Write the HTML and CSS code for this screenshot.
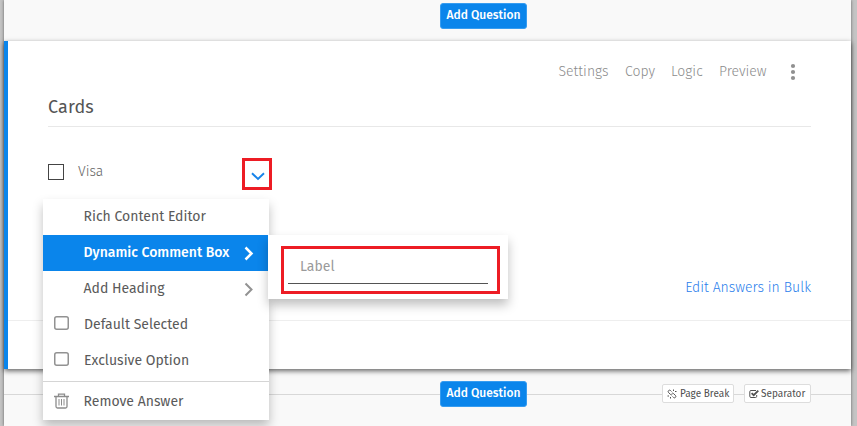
FILE: index.html
```html
<!DOCTYPE html>
<html lang="en">
<head>
<meta charset="utf-8">
<title>Survey editor</title>
<link rel="stylesheet" href="styles.css">
</head>
<body>
<main class="page">
  <div class="add-row add-row--top"><button class="add-btn"><span>Add Question</span></button></div>
  <section class="card">
    <nav class="actions">
      <a class="settings">Settings</a><a class="copy">Copy</a><a class="logic">Logic</a><a class="preview">Preview</a>
      <svg class="dots" width="6" height="18" viewBox="0 0 6 18"><circle cx="3" cy="3" r="2.1"/><circle cx="3" cy="9" r="2.1"/><circle cx="3" cy="15" r="2.1"/></svg>
    </nav>
    <h1 class="title"><span>Cards</span></h1>
    <div class="answer">
      <span class="box"></span>
      <span class="answer-text">Visa</span>
      <span class="toggle"><svg width="14" height="9" viewBox="0 0 14 9"><path d="M1 1.2 7 7 13 1.2"/></svg></span>
      <div class="menu">
        <div class="item"><span>Rich Content Editor</span></div>
        <div class="item item--active"><span>Dynamic Comment Box</span>
          <svg class="arrow" width="10" height="15" viewBox="0 0 10 15"><path d="M1.5 1.5 7.5 7.5 1.5 13.5"/></svg>
          <div class="submenu"><div class="field-frame"><div class="field"><span>Label</span></div></div></div>
        </div>
        <div class="item"><span>Add Heading</span>
          <svg class="arrow" width="10" height="15" viewBox="0 0 10 15"><path d="M1.5 1.5 7.5 7.5 1.5 13.5"/></svg>
        </div>
        <div class="item"><svg class="check" width="15" height="14" viewBox="0 0 15 14"><rect x=".75" y=".75" width="13.5" height="12.5" rx="2"/></svg><span>Default Selected</span></div>
        <div class="item"><svg class="check" width="15" height="14" viewBox="0 0 15 14"><rect x=".75" y=".75" width="13.5" height="12.5" rx="2"/></svg><span>Exclusive Option</span></div>
        <div class="item item--remove">
          <svg class="trash" width="15" height="16" viewBox="0 0 15 16"><path d="M0 3.5H15M4.5 3.5V1.2H10.5V3.5M2 3.5V13.5Q2 15 3.5 15H11.5Q13 15 13 13.5V3.5"/><path class="thin" d="M5 6V12.5M7.5 6V12.5M10 6V12.5"/></svg>
          <span>Remove Answer</span>
        </div>
      </div>
    </div>
    <div class="bulk"><a>Edit Answers in Bulk</a></div>
    <div class="card-foot"></div>
  </section>
  <div class="add-row add-row--bottom">
    <i class="rule"></i>
    <button class="add-btn"><span>Add Question</span></button>
    <i class="rule rule--mid"></i>
    <button class="mini mini--break"><svg width="10" height="10" viewBox="0 0 10 10"><path d="M4.5 2.5 3.5 1.5Q2.5.7 1.6 1.6T1.5 3.5L3.6 5.5Q4.5 6.2 5.2 5.6M5.6 7.5 6.6 8.5Q7.5 9.3 8.4 8.4T8.5 6.5L6.4 4.5Q5.5 3.8 4.8 4.4M6.5.5V2M8 2.5H9.5M.5 7H2M3.5 8V9.5"/></svg><span>Page Break</span></button>
    <i class="rule rule--gap"></i>
    <button class="mini mini--sep"><svg width="10" height="10" viewBox="0 0 10 10"><path d="M7 1.5H2Q.8 1.5.8 2.7V7.3Q.8 8.5 2 8.5H6.5Q7.7 8.5 7.7 7.3V6"/><path class="tick" d="M2.6 4.2 4.7 6.2 9.3 1.7"/></svg><span>Separator</span></button>
    <i class="rule rule--end"></i>
  </div>
</main>
</body>
</html>
```

FILE: styles.css
```css
* { box-sizing: border-box; }
body { margin: 0; width: 857px; height: 426px; overflow: hidden; background: #c4c4c4; font-family: "Fira Sans", "Noto Sans", sans-serif; color: #5a5a5a; }
span, a { white-space: nowrap; }
svg { display: block; flex: none; fill: none; stroke: currentColor; }
button { font: inherit; }
.page { width: 847px; height: 426px; margin-left: 4px; background: #f9f9f9; box-shadow: 0 0 3px rgba(0,0,0,.5); }
.add-row { display: flex; align-items: flex-start; }
.add-row--top { height: 41px; padding: 3px 0 0 436px; }
.add-btn { width: 87px; height: 26px; flex: none; padding: 0; border: 1px solid #369cf0; border-radius: 3px; background: #0a85eb; color: #fff; font-size: 12px; font-weight: 500; line-height: 23px; display: flex; justify-content: center; }
.card { position: relative; height: 328px; border-left: 4px solid #0a85eb; background: #fff; box-shadow: 0 2px 5px rgba(0,0,0,.6); display: flex; flex-direction: column; }
.actions { height: 60px; flex: none; padding: 21px 55px 0 550.5px; display: flex; font-size: 14px; font-weight: 300; line-height: 20px; color: #8c8c8c; }
.settings { width: 66.5px; } .copy { width: 46px; } .logic { width: 48px; } .preview { width: 71px; }
.actions a { flex: none; }
.dots { fill: #909090; stroke: none; margin-top: 1px; }
.title { flex: none; margin: -6px 40px 0; height: 32px; border-bottom: 1px solid #e8e8e8; font-size: 18px; font-weight: 400; line-height: 24px; color: #545454; letter-spacing: .1px; }
.answer { position: relative; flex: none; margin: 31px 40px 0; height: 32px; display: flex; }
.box { width: 16px; height: 16px; margin: 6px 14px 0 0; border: 1px solid #444; }
.answer-text { width: 164px; font-size: 14px; font-weight: 300; line-height: 28px; color: #666; }
.toggle { width: 30px; height: 32px; border: 3px solid #ed1c24; padding: 11px 0 0 6px; color: #1683ea; }
.toggle svg { stroke-width: 1.9; }
.menu { position: absolute; left: -5px; top: 41px; width: 226px; height: 221px; background: #fff; box-shadow: 0 6px 10px rgba(0,0,0,.25); z-index: 2; font-size: 14px; line-height: 36px; }
.item { position: relative; height: 36px; padding-left: 40.5px; display: flex; }
.item--active { background: #0a85eb; color: #fff; font-weight: 500; }
.arrow { position: absolute; left: 201px; top: 11px; stroke: #929292; stroke-width: 2; }
.item--active .arrow { stroke: #fff; stroke-width: 2.5; }
.check { margin: 9px 15px 0 -29.5px; stroke: #929292; stroke-width: 1.5; }
.item--remove { height: 40px; margin-top: 2px; border-top: 1px solid #d5d5d5; line-height: 40px; }
.trash { margin: 11px 15px 0 -30px; stroke: #8c8c8c; stroke-width: 1.3; }
.trash .thin { stroke-width: 1; }
.submenu { position: absolute; left: 225px; top: 0; width: 240px; height: 64px; padding: 11px 8px 5px 13px; background: #fff; box-shadow: 0 6px 10px rgba(0,0,0,.25); color: #9a9a9a; font-weight: 400; }
.field-frame { height: 48px; border: 3px solid #ed1c24; padding: 0 9px 0 4px; }
.field { height: 35px; padding-left: 12px; border-bottom: 1px solid #545454; }
.bulk { flex: none; margin-top: 85px; height: 45px; padding-right: 40px; text-align: right; font-size: 14px; font-weight: 300; line-height: 25px; color: #2b80ec; }
.card-foot { flex: 1; border-top: 1px solid #eee; }
.add-row--bottom { padding-top: 12px; }
.rule { height: 1px; width: 436px; margin-top: 13px; background: #d8d8d8; flex: none; }
.rule--mid { width: 135px; } .rule--gap { width: 10px; } .rule--end { width: 40px; }
.mini { height: 19px; margin-top: 3px; flex: none; display: flex; align-items: center; gap: 3px; border: 1px solid #ddd; border-radius: 2px; background: #fff; color: #505050; font-size: 10px; line-height: 17px; padding: 0 0 0 4px; }
.mini span { padding-top: 2px; }
.mini--break { width: 72px; } .mini--sep { width: 67px; }
.mini--sep span { margin-left: -1px; }
.mini .tick { stroke-width: 1.8; }
```
